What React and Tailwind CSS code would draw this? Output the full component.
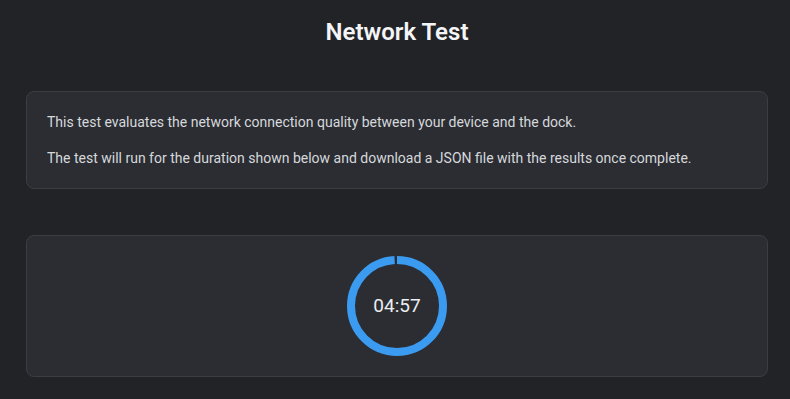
import React from 'react';

const ProgressRing = ({ progress, label }) => {
    const radius = 46;
    const circumference = 2 * Math.PI * radius;
    return (
        <div className="relative w-[100px] h-[100px]">
            <svg width="100" height="100" viewBox="0 0 100 100" className="-rotate-90">
                <circle
                    cx="50"
                    cy="50"
                    r={radius}
                    fill="none"
                    stroke="#3a9bf0"
                    strokeWidth="8"
                    strokeDasharray={`${circumference * progress} ${circumference}`}
                />
            </svg>
            <div className="absolute inset-0 flex items-center justify-center text-[19px] text-[#eceef1]">
                {label}
            </div>
        </div>
    );
};

const App = () => {
    return (
        <div className="min-h-[399px] bg-[#222327] font-['Roboto',sans-serif] pt-[17px] pb-[22px] pl-[26px] pr-[22px]">
            <h1 className="text-center text-[24px] leading-[30px] font-semibold text-[#f4f5f7]">
                Network Test
            </h1>

            {/* Info */}
            <div className="mt-[44px] rounded-lg border border-[#3b3d43] bg-[#2b2d32] px-5 py-5 text-[14px] leading-5 text-[#d6d8dc] space-y-4">
                <p>This test evaluates the network connection quality between your device and the dock.</p>
                <p>The test will run for the duration shown below and download a JSON file with the results once complete.</p>
            </div>

            {/* Timer */}
            <div className="mt-[46px] rounded-lg border border-[#3b3d43] bg-[#2b2d32] py-5 flex justify-center">
                <ProgressRing progress={0.99} label="04:57" />
            </div>
        </div>
    );
};

export default App;
